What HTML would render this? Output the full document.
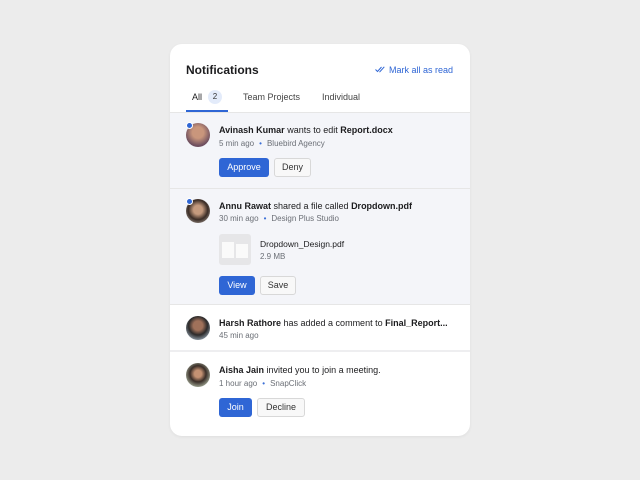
<!DOCTYPE html>
<html><head><style>
*{margin:0;padding:0;box-sizing:border-box}
body{width:640px;height:480px;background:#ececec;font-family:"Liberation Sans",sans-serif;position:relative;overflow:hidden;color:#1c1c1e}
.card{position:absolute;left:170px;top:44px;width:300px;height:392px;background:#fff;border-radius:12px;overflow:hidden;box-shadow:0 1px 3px rgba(0,0,0,.06)}
.a{position:absolute}
.t{font-size:9px;white-space:nowrap}
.m{font-size:8px;color:#6b6f76;white-space:nowrap}
.m i{color:#3b6fd6;font-style:normal;margin:0 5px}
b{font-weight:bold}
.btn{position:absolute;height:19px;border-radius:3px;font-size:9px;line-height:19px;text-align:center}
.p{background:#2f66d5;color:#fff}
.s{background:#f8f8f8;border:1px solid #d8d8d8;color:#333;line-height:17px}
.av{position:absolute;left:16px;width:24px;height:24px;border-radius:50%}
.dot{position:absolute;left:16px;width:7px;height:7px;border-radius:50%;background:#2f66d5;border:1px solid #fff}
</style></head><body>
<div class="card">
<div class="a" style="left:16px;top:19px;font-size:12px;font-weight:bold;color:#1c1c1e">Notifications</div>
<div class="a" style="left:205px;top:21px;font-size:9px;color:#2f66d5;white-space:nowrap"><svg width="11" height="7" viewBox="0 0 11 7" style="margin-right:3px"><path d="M0.5 3.5l2 2 4-4.5M4.5 5.5l0.3 0.3 4.5-5" stroke="#2f66d5" stroke-width="1" fill="none"/></svg>Mark all as read</div>
<div class="a t" style="left:22px;top:48px;color:#1c1c1e">All</div>
<div class="a" style="left:38px;top:46px;width:14px;height:14px;border-radius:50%;background:#e3ebfa;font-size:8px;text-align:center;line-height:14px;color:#333">2</div>
<div class="a t" style="left:73px;top:48px;color:#444">Team Projects</div>
<div class="a t" style="left:152px;top:48px;color:#444">Individual</div>
<div class="a" style="left:16px;top:66px;width:42px;height:2px;background:#2f66d5"></div>
<div class="a" style="left:0;top:68px;width:300px;height:1px;background:#e6e6e6"></div>

<div class="a" style="left:0;top:69px;width:300px;height:76px;background:#f4f5f9;border-bottom:1px solid #e6e6e6"></div>
<div class="av" style="top:79px;background:radial-gradient(circle at 50% 40%,#c9967c 30%,#6e4f5f 70%)"></div>
<div class="dot" style="top:78px"></div>
<div class="a t" style="left:49px;top:81px"><b>Avinash Kumar</b> wants to edit <b>Report.docx</b></div>
<div class="a m" style="left:49px;top:95px">5 min ago<i>•</i>Bluebird Agency</div>
<div class="btn p" style="left:49px;top:114px;width:50px">Approve</div>
<div class="btn s" style="left:104px;top:114px;width:37px">Deny</div>

<div class="a" style="left:0;top:145px;width:300px;height:116px;background:#f4f5f9;border-bottom:1px solid #e6e6e6"></div>
<div class="av" style="top:155px;background:radial-gradient(circle at 50% 45%,#c49a7e 25%,#3a2c26 55%,#8b8078 80%)"></div>
<div class="dot" style="top:154px"></div>
<div class="a t" style="left:49px;top:157px"><b>Annu Rawat</b> shared a file called <b>Dropdown.pdf</b></div>
<div class="a m" style="left:49px;top:170px">30 min ago<i>•</i>Design Plus Studio</div>
<div class="a" style="left:49px;top:190px;width:32px;height:31px;background:#e6e6e8;border-radius:3px"><div class="a" style="left:3px;top:8px;width:12px;height:16px;background:#fafafa"></div><div class="a" style="left:17px;top:10px;width:12px;height:14px;background:#fafafa"></div></div>
<div class="a t" style="left:90px;top:195px;font-size:8.5px">Dropdown_Design.pdf</div>
<div class="a m" style="left:90px;top:208px">2.9 MB</div>
<div class="btn p" style="left:49px;top:232px;width:36px">View</div>
<div class="btn s" style="left:90px;top:232px;width:36px">Save</div>

<div class="a" style="left:0;top:261px;width:300px;height:47px;background:#fff;border-bottom:2px solid #eeeef0"></div>
<div class="av" style="top:272px;background:radial-gradient(circle at 50% 40%,#a0715a 25%,#2c2a2a 50%,#7f8a94 75%)"></div>
<div class="a t" style="left:49px;top:274px"><b>Harsh Rathore</b> has added a comment to <b>Final_Report...</b></div>
<div class="a m" style="left:49px;top:287px">45 min ago</div>

<div class="av" style="top:319px;background:radial-gradient(circle at 50% 45%,#c49273 20%,#3a2e28 45%,#9aa08e 75%)"></div>
<div class="a t" style="left:49px;top:321px"><b>Aisha Jain</b> invited you to join a meeting.</div>
<div class="a m" style="left:49px;top:335px">1 hour ago<i>•</i>SnapClick</div>
<div class="btn p" style="left:49px;top:354px;width:33px">Join</div>
<div class="btn s" style="left:87px;top:354px;width:48px">Decline</div>
</div>
</body></html>
